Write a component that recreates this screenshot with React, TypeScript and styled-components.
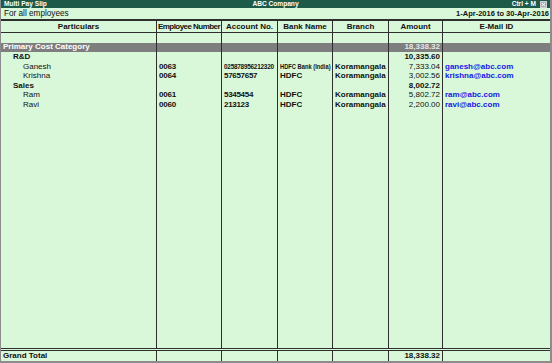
import React from 'react';
import styled, { createGlobalStyle } from 'styled-components';

const GlobalStyle = createGlobalStyle`
  html, body { margin: 0; padding: 0; background: #d9f7d9; }
  body { font-family: "Liberation Sans", Arial, sans-serif; }
`;

const COLS = '156px 65px 56px 55px 56px 54px 1fr';
const LINE = '#2e2e2e';

const Frame = styled.div`
  width: 552px;
  height: 363px;
  box-sizing: border-box;
  display: flex;
  flex-direction: column;
  background: #d9f7d9;
  border-left: 1px solid #8c8c8c;
  border-right: 2px solid #8c8c8c;
  border-bottom: 2px solid #8c8c8c;
  color: #111;
  overflow: hidden;
`;

const TitleBar = styled.div`
  height: 8px;
  flex: none;
  background: #1d5a48;
  color: #fff;
  font-size: 6.6px;
  font-weight: bold;
  display: grid;
  grid-template-columns: 1fr auto 1fr;
  align-items: center;
  padding: 0 3px;
  line-height: 8px;
`;

const TitleRight = styled.div`
  justify-self: end;
  display: flex;
  align-items: center;
  gap: 4px;
`;

const CloseBox = styled.span`
  width: 5px;
  height: 5px;
  border: 1px solid #d0d0d0;
  background: #9aa;
  position: relative;
  &::before, &::after {
    content: '';
    position: absolute;
    left: 0;
    top: 2px;
    width: 5px;
    height: 1px;
    background: #fff;
    transform: rotate(45deg);
  }
  &::after { transform: rotate(-45deg); }
`;

const SubHeader = styled.div`
  height: 13px;
  flex: none;
  display: flex;
  justify-content: space-between;
  align-items: center;
  padding: 0 1px 0 3px;
  border-bottom: 2px solid ${LINE};
  box-sizing: border-box;
`;

const Scope = styled.span`
  font-size: 8.2px;
`;

const Period = styled.span`
  font-size: 7.5px;
  font-weight: bold;
`;

const Row = styled.div<{ $h?: number; $shade?: boolean; $grow?: boolean; $topDouble?: boolean; $bottom?: boolean }>`
  display: grid;
  grid-template-columns: ${COLS};
  flex: ${p => (p.$grow ? '1' : 'none')};
  height: ${p => (p.$grow ? 'auto' : `${p.$h ?? 9.6}px`)};
  background: ${p => (p.$shade ? '#7e7e7e' : 'transparent')};
  color: ${p => (p.$shade ? '#fff' : 'inherit')};
  border-top: ${p => (p.$topDouble ? `3px double ${LINE}` : 'none')};
  border-bottom: ${p => (p.$bottom ? `1px solid ${LINE}` : 'none')};
`;

const Cell = styled.div<{ $align?: 'left' | 'right' | 'center'; $bold?: boolean; $indent?: number; $blue?: boolean; $dim?: boolean; $size?: number; $tight?: number }>`
  border-right: 1px solid ${LINE};
  &:last-child { border-right: none; }
  font-size: ${p => p.$size ?? 8}px;
  font-weight: ${p => (p.$bold ? 'bold' : 'normal')};
  color: ${p => (p.$blue ? '#1717e8' : p.$dim ? '#e6e6e6' : 'inherit')};
  text-align: ${p => p.$align ?? 'left'};
  padding: 0 2px 0 ${p => 2 + (p.$indent ?? 0)}px;
  letter-spacing: ${p => p.$tight ?? 0}px;
  white-space: nowrap;
  overflow: hidden;
  display: flex;
  align-items: center;
  justify-content: ${p => (p.$align === 'right' ? 'flex-end' : p.$align === 'center' ? 'center' : 'flex-start')};
  line-height: 1;
`;

const Squeeze = styled.span<{ $sx: number }>`
  display: inline-block;
  transform: scaleX(${p => p.$sx});
  transform-origin: left center;
`;

type Line = {
  name: string;
  indent: number;
  bold?: boolean;
  emp?: string;
  acct?: string;
  bank?: string;
  branch?: string;
  amount: string;
  email?: string;
};

const lines: Line[] = [
  { name: 'R&D', indent: 10, bold: true, amount: '10,335.60' },
  { name: 'Ganesh', indent: 20, emp: '0063', acct: '025878956212320', bank: 'HDFC Bank (India)', branch: 'Koramangala', amount: '7,333.04', email: 'ganesh@abc.com' },
  { name: 'Krishna', indent: 20, emp: '0064', acct: '57657657', bank: 'HDFC', branch: 'Koramangala', amount: '3,002.56', email: 'krishna@abc.com' },
  { name: 'Sales', indent: 10, bold: true, amount: '8,002.72' },
  { name: 'Ram', indent: 20, emp: '0061', acct: '5345454', bank: 'HDFC', branch: 'Koramangala', amount: '5,802.72', email: 'ram@abc.com' },
  { name: 'Ravi', indent: 20, emp: '0060', acct: '213123', bank: 'HDFC', branch: 'Koramangala', amount: '2,200.00', email: 'ravi@abc.com' },
];

const headers = ['Particulars', 'Employee Number', 'Account No.', 'Bank Name', 'Branch', 'Amount', 'E-Mail ID'];

function EmptyCells() {
  return (
    <>
      {headers.map(h => (
        <Cell key={h} />
      ))}
    </>
  );
}

// long values are squeezed to fit their narrow column, as the source report does
function Fit({ text, max, sx }: { text?: string; max: number; sx: number }) {
  if (!text) return null;
  return text.length > max ? <Squeeze $sx={sx}>{text}</Squeeze> : <>{text}</>;
}

function App() {
  return (
    <>
      <GlobalStyle />
      <Frame>
        <TitleBar>
          <span>Multi Pay Slip</span>
          <span>ABC Company</span>
          <TitleRight>
            <span>Ctrl + M</span>
            <CloseBox />
          </TitleRight>
        </TitleBar>
        <SubHeader>
          <Scope>For all employees</Scope>
          <Period>1-Apr-2016 to 30-Apr-2016</Period>
        </SubHeader>

        <Row $h={11} $bottom>
          {headers.map(h => (
            <Cell key={h} $align="center" $bold $tight={h === 'Employee Number' ? -0.55 : 0}>
              {h}
            </Cell>
          ))}
        </Row>
        <Row>
          <EmptyCells />
        </Row>
        <Row $shade>
          <Cell $bold>Primary Cost Category</Cell>
          <Cell />
          <Cell />
          <Cell />
          <Cell />
          <Cell $align="right" $bold $dim>18,338.32</Cell>
          <Cell />
        </Row>

        {lines.map(l => (
          <Row key={l.name}>
            <Cell $indent={l.indent} $bold={l.bold}>{l.name}</Cell>
            <Cell $bold $tight={-0.2}>{l.emp}</Cell>
            <Cell $bold $tight={-0.3}>
              <Fit text={l.acct} max={10} sx={0.8} />
            </Cell>
            <Cell $bold>
              <Fit text={l.bank} max={6} sx={0.72} />
            </Cell>
            <Cell $bold>{l.branch}</Cell>
            <Cell $align="right" $bold={l.bold}>{l.amount}</Cell>
            <Cell $bold $blue>{l.email}</Cell>
          </Row>
        ))}

        <Row $grow>
          <EmptyCells />
        </Row>

        <Row $h={10} $topDouble>
          <Cell $bold>Grand Total</Cell>
          <Cell />
          <Cell />
          <Cell />
          <Cell />
          <Cell $align="right" $bold>18,338.32</Cell>
          <Cell />
        </Row>
      </Frame>
    </>
  );
}

export default React.memo(App);
